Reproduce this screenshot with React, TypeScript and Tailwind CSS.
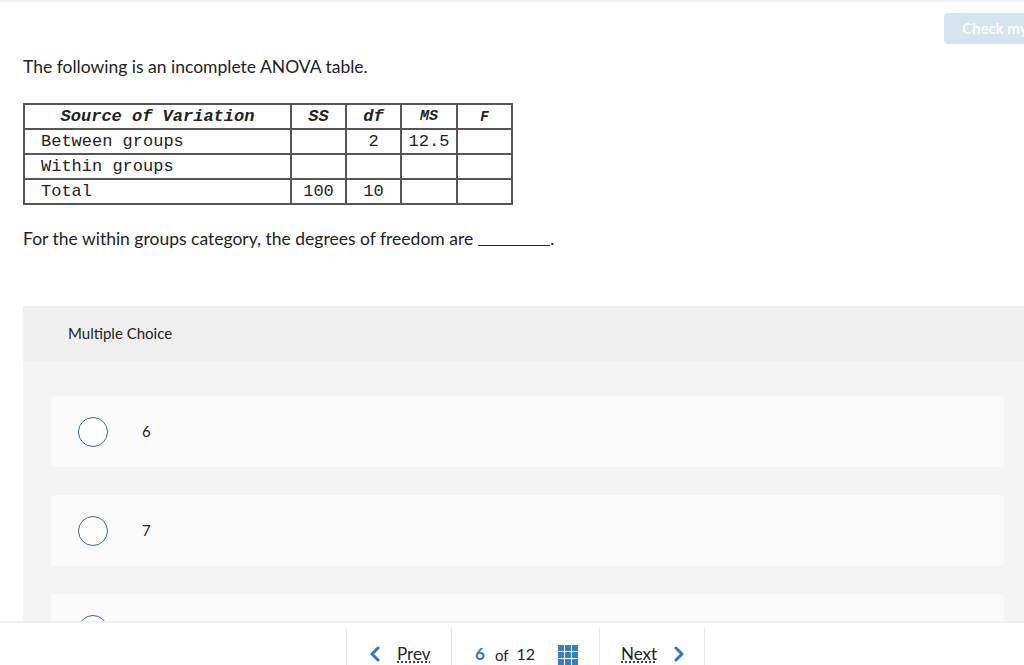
import React from 'react';

const rows = [
  { label: 'Between groups', ss: '', df: '2', ms: '12.5', f: '' },
  { label: 'Within groups', ss: '', df: '', ms: '', f: '' },
  { label: 'Total', ss: '100', df: '10', ms: '', f: '' },
];

const choices = ['6', '7', '8'];

const Chevron: React.FC<{ dir: 'left' | 'right' }> = ({ dir }) => (
  <svg width="12" height="16" viewBox="0 0 12 16" className="text-[#2f78bd]">
    <polyline
      points={dir === 'left' ? '9,2 3,8 9,14' : '3,2 9,8 3,14'}
      fill="none"
      stroke="currentColor"
      strokeWidth="3"
      strokeLinecap="round"
      strokeLinejoin="round"
    />
  </svg>
);

const GridIcon: React.FC = () => (
  <svg width="20" height="20" viewBox="0 0 20 20">
    {[0, 1, 2].map((r) =>
      [0, 1, 2].map((c) => (
        <rect key={`${r}-${c}`} x={c * 7} y={r * 7} width="6" height="6" fill="#3a7cc1" />
      ))
    )}
  </svg>
);

const Cell: React.FC<{ children?: React.ReactNode; className?: string }> = ({ children, className = '' }) => (
  <td className={`border border-[#555] h-[25px] p-0 text-center ${className}`}>{children}</td>
);

export default function App() {
  return (
    <div className="h-screen w-full overflow-hidden flex flex-col bg-white text-[#222] font-['Lato','Open_Sans',sans-serif]">
      <main className="flex-1 overflow-hidden border-t-2 border-[#f3f3f3]">
        <div className="flex justify-end mt-[11px] mr-[-60px]">
          <button className="h-[31px] w-[140px] rounded-[4px] bg-[#d6e3f0] text-white font-bold text-[15px] text-left pl-[18px]">
            Check my work
          </button>
        </div>

        <div className="pl-[23px]">
          <p className="mt-[13px] text-[17.5px] leading-[20px]">The following is an incomplete ANOVA table.</p>

          <table className="mt-[26px] border border-[#555] border-separate border-spacing-0 font-['Liberation_Mono',monospace] text-[17px] leading-[20px] text-[#222]">
            <thead>
              <tr>
                <th className="border border-[#555] h-[25px] w-[267px] italic font-bold">Source of Variation</th>
                <th className="border border-[#555] w-[55px] italic font-bold">SS</th>
                <th className="border border-[#555] w-[55px] italic font-bold">df</th>
                <th className="border border-[#555] w-[56px] italic font-bold text-[15px]">MS</th>
                <th className="border border-[#555] w-[55px] italic font-bold text-[14px]">F</th>
              </tr>
            </thead>
            <tbody>
              {rows.map((row) => (
                <tr key={row.label}>
                  <Cell className="text-left pl-[16px]">{row.label}</Cell>
                  <Cell>{row.ss}</Cell>
                  <Cell>{row.df}</Cell>
                  <Cell>{row.ms}</Cell>
                  <Cell>{row.f}</Cell>
                </tr>
              ))}
            </tbody>
          </table>

          <p className="mt-[24px] text-[17.5px] leading-[20px] flex items-end">
            For the within groups category, the degrees of freedom are
            <span className="inline-block w-[72px] ml-[5px] mb-[3px] border-b border-[#222]" />
            <span>.</span>
          </p>

          <section className="mt-[57px] mr-[-8px]">
            <div className="h-[55px] bg-[#efefef] flex items-center pl-[45px] text-[15px]">Multiple Choice</div>
            <div className="bg-[#f4f4f4] pt-[35px] px-[28px] flex flex-col gap-[28px] pb-[28px]">
              {choices.map((c) => (
                <label key={c} className="h-[71px] rounded-[4px] bg-[#fafafa] flex items-center pl-[27px]">
                  <span className="w-[30px] h-[30px] rounded-full border-[1.5px] border-[#2e6ca3] bg-white" />
                  <span className="ml-[34px] text-[15px]">{c}</span>
                </label>
              ))}
            </div>
          </section>
        </div>
      </main>

      <footer className="h-[44px] shrink-0 bg-white border-t-2 border-[#f0f0f0] overflow-hidden">
        <nav className="flex pl-[346px] mt-[5px] h-full text-[17px] leading-[20px]">
          <div className="w-[105px] border-l border-[#e6e6e6] flex items-start pt-[16px] pl-[22px] gap-[16px]">
            <span className="mt-[2px]"><Chevron dir="left" /></span>
            <span className="underline decoration-dotted underline-offset-2">Prev</span>
          </div>
          <div className="w-[148px] border-l border-[#e6e6e6] flex items-start pt-[16px] pl-[23px]">
            <span className="font-bold text-[#2f78bd]">6</span>
            <span className="ml-[10px] text-[15px] mt-[1px]">of</span>
            <span className="ml-[8px] text-[16px]">12</span>
            <span className="ml-[23px] mt-[1px]"><GridIcon /></span>
          </div>
          <div className="w-[106px] border-l border-r border-[#e6e6e6] flex items-start pt-[16px] pl-[21px] gap-[16px]">
            <span className="underline decoration-dotted underline-offset-2">Next</span>
            <span className="mt-[2px]"><Chevron dir="right" /></span>
          </div>
        </nav>
      </footer>
    </div>
  );
}
